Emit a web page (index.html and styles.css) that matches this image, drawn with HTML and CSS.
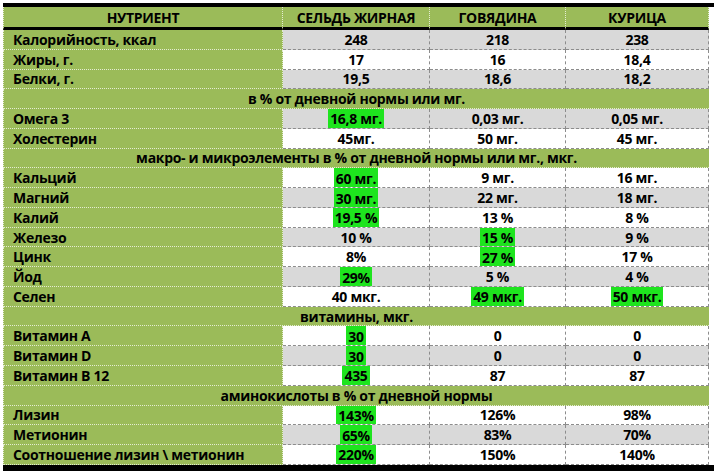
FILE: index.html
```html
<!DOCTYPE html>
<html lang="ru">
<head>
<meta charset="utf-8">
<title>Нутриенты</title>
<link rel="stylesheet" href="styles.css">
</head>
<body>
<div class="sheet">
  <div class="grid">
    <div class="hd first">НУТРИЕНТ</div>
    <div class="hd">СЕЛЬДЬ ЖИРНАЯ</div>
    <div class="hd">ГОВЯДИНА</div>
    <div class="hd">КУРИЦА</div>

    <div class="name">Калорийность, ккал</div>
    <div class="v g">248</div><div class="v g">218</div><div class="v g">238</div>
    <div class="name">Жиры, г.</div>
    <div class="v w">17</div><div class="v w">16</div><div class="v w">18,4</div>
    <div class="name">Белки, г.</div>
    <div class="v g">19,5</div><div class="v g">18,6</div><div class="v g">18,2</div>

    <div class="sec">в % от дневной нормы или мг.</div>
    <div class="name">Омега 3</div>
    <div class="v g"><span class="hl">16,8 мг.</span></div><div class="v g">0,03 мг.</div><div class="v g">0,05 мг.</div>
    <div class="name">Холестерин</div>
    <div class="v w">45мг.</div><div class="v w">50 мг.</div><div class="v w">45 мг.</div>

    <div class="sec">макро- и микроэлементы в % от дневной нормы или мг., мкг.</div>
    <div class="name">Кальций</div>
    <div class="v w"><span class="hl">60 мг.</span></div><div class="v w">9 мг.</div><div class="v w">16 мг.</div>
    <div class="name">Магний</div>
    <div class="v g"><span class="hl">30 мг.</span></div><div class="v g">22 мг.</div><div class="v g">18 мг.</div>
    <div class="name">Калий</div>
    <div class="v w"><span class="hl">19,5 %</span></div><div class="v w">13 %</div><div class="v w">8 %</div>
    <div class="name">Железо</div>
    <div class="v g">10 %</div><div class="v g"><span class="hl">15 %</span></div><div class="v g">9 %</div>
    <div class="name">Цинк</div>
    <div class="v w">8%</div><div class="v w"><span class="hl">27 %</span></div><div class="v w">17 %</div>
    <div class="name">Йод</div>
    <div class="v g"><span class="hl">29%</span></div><div class="v g">5 %</div><div class="v g">4 %</div>
    <div class="name">Селен</div>
    <div class="v w">40 мкг.</div><div class="v w"><span class="hl">49 мкг.</span></div><div class="v w"><span class="hl">50 мкг.</span></div>

    <div class="sec">витамины, мкг.</div>
    <div class="name">Витамин А</div>
    <div class="v w"><span class="hl">30</span></div><div class="v w">0</div><div class="v w">0</div>
    <div class="name">Витамин D</div>
    <div class="v g"><span class="hl">30</span></div><div class="v g">0</div><div class="v g">0</div>
    <div class="name">Витамин В 12</div>
    <div class="v w"><span class="hl">435</span></div><div class="v w">87</div><div class="v w">87</div>

    <div class="sec">аминокислоты в % от дневной нормы</div>
    <div class="name">Лизин</div>
    <div class="v w"><span class="hl">143%</span></div><div class="v w">126%</div><div class="v w">98%</div>
    <div class="name">Метионин</div>
    <div class="v g"><span class="hl">65%</span></div><div class="v g">83%</div><div class="v g">70%</div>
    <div class="name">Соотношение лизин \ метионин</div>
    <div class="v w"><span class="hl">220%</span></div><div class="v w">150%</div><div class="v w">140%</div>
  </div>
</div>
</body>
</html>
```
FILE: styles.css
```css
html, body {
  margin: 0;
  padding: 0;
  background: #ffffff;
}

body {
  font-family: "Open Sans", "DejaVu Sans", sans-serif;
  font-weight: 700;
  font-size: 14px;
  color: #000;
  letter-spacing: -0.3px;
}

.sheet {
  margin: 3px 0 0 3px;
  border-top: 4px solid #000;
  border-bottom: 8px solid #000;
}

.grid {
  display: grid;
  width: 706px;
  grid-template-columns: 280px 147px 136px 143px;
  grid-template-rows: 23px;
  grid-auto-rows: 19.77px;
}

.grid > div {
  box-sizing: border-box;
  display: flex;
  align-items: center;
  justify-content: center;
  white-space: nowrap;
  overflow: hidden;
}

.hd {
  background: #9bbb59;
  border-bottom: 3px solid #000;
  border-right: 1px dotted #e4ecd2;
}

.hd.first {
  border-left: 1px dotted #e4ecd2;
}

.name {
  background: #9bbb59;
  justify-content: flex-start !important;
  padding-left: 9px;
  border-left: 1px dotted #e4ecd2;
  border-right: 1px dotted #e4ecd2;
  border-bottom: 1px dotted #e4ecd2;
}

.v {
  border-right: 1px dashed #8c8c8c;
  border-bottom: 1px dashed #8c8c8c;
}

.g {
  background: #d9d9d9;
}

.w {
  background: #ffffff;
}

.sec {
  grid-column: 1 / -1;
  background: #9bbb59;
  border-left: 1px dotted #e4ecd2;
  border-bottom: 1px dotted #e4ecd2;
}

.hl {
  background: #1ee41e;
  align-self: stretch;
  display: flex;
  align-items: center;
  padding: 0 2px;
  margin-bottom: -1px;
}
```
